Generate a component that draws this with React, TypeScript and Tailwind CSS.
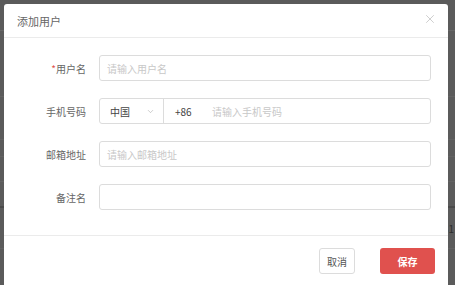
import { ChevronDown, X } from "lucide-react"

const font = { fontFamily: '"Noto Sans CJK SC", "Noto Sans", sans-serif' }

function Row({ label, required, children }: { label: string; required?: boolean; children: React.ReactNode }) {
  return (
    <div className="flex items-center h-[26px]">
      <div className="w-[91px] pr-[13px] text-right text-[10px] text-[#666]">
        {required && <span className="text-[#e0524f]">*</span>}
        {label}
      </div>
      <div className="flex-1">{children}</div>
    </div>
  )
}

function TextInput({ placeholder }: { placeholder?: string }) {
  return (
    <div className="h-[26px] border border-[#dcdcdc] rounded-[3px] px-[7px] flex items-center text-[10px] text-[#c8c8c8]">
      {placeholder}
    </div>
  )
}

export default function App() {
  return (
    <div className="relative w-[455px] h-[285px] overflow-hidden bg-[#5b5b5b]" style={font}>
      {/* page behind the overlay */}
      <div className="absolute inset-0 flex flex-col">
        <div className="h-[31px] border-b border-[#676767]" />
        <div className="h-[66px] border-b border-[#636363]" />
        <div className="h-[43px] border-b border-[#626262]" />
        <div className="h-[17px] border-b border-[#626262]" />
        <div className="h-[25px] border-b border-[#636363]" />
        <div className="h-[26px] border-b-2 border-[#4a4a4a]" />
        <div className="h-[41px] border-b border-[#626262] flex justify-end items-center pr-[1px] text-[10px] text-[#2d2d2d]">31</div>
      </div>

      <div className="absolute left-[4px] top-[4px] w-[444px] h-[290px] bg-white rounded-[3px] flex flex-col">
        <div className="h-[34px] border-b border-[#ebebeb] flex items-center justify-between pl-[13px] pr-[11px] pt-[2px]">
          <span className="text-[11px] text-[#666]">添加用户</span>
          <X size={14} strokeWidth={1.4} className="text-[#c4c4c4] -mt-[6px]" />
        </div>

        <div className="flex flex-col gap-[17px] pt-[17px] pl-[4px] pr-[17px]">
          <Row label="用户名" required>
            <TextInput placeholder="请输入用户名" />
          </Row>
          <Row label="手机号码">
            <div className="h-[26px] border border-[#dcdcdc] rounded-[3px] flex items-center text-[10px]">
              <div className="w-[64px] h-full border-r border-[#dcdcdc] flex items-center justify-between pl-[10px] pr-[8px] text-[#444]">
                <span>中国</span>
                <ChevronDown size={9} strokeWidth={1.5} className="text-[#aaa]" />
              </div>
              <span className="pl-[11px] w-[48px] text-[#444]">+86</span>
              <span className="text-[#c8c8c8]">请输入手机号码</span>
            </div>
          </Row>
          <Row label="邮箱地址">
            <TextInput placeholder="请输入邮箱地址" />
          </Row>
          <Row label="备注名">
            <TextInput />
          </Row>
        </div>

        <div className="mt-[25px] border-t border-[#ebebeb] flex justify-end items-start gap-[25px] pt-[12px] pr-[13px]">
          <button className="w-[36px] h-[26px] border border-[#dcdcdc] rounded-[3px] text-[10px] text-[#555] bg-white">取消</button>
          <button className="w-[55px] h-[26px] rounded-[3px] text-[10px] font-bold text-white bg-[#e0514e]">保存</button>
        </div>
      </div>
    </div>
  )
}
